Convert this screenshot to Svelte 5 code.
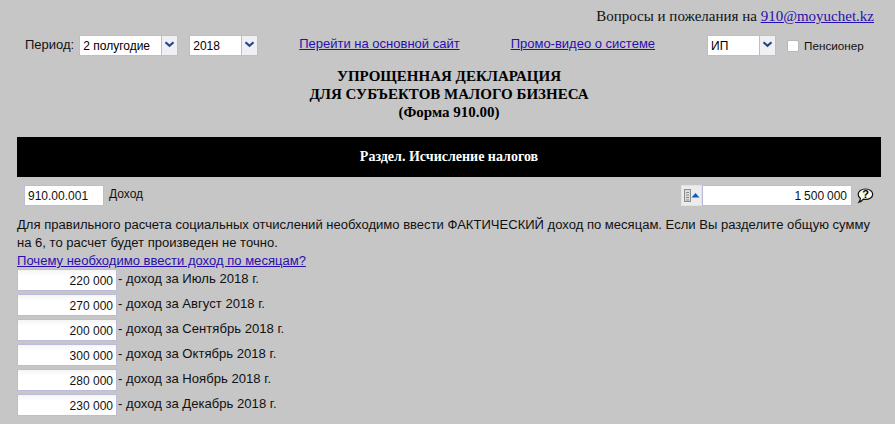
<script>
	const months = [
		{ value: '220 000', name: 'Июль' },
		{ value: '270 000', name: 'Август' },
		{ value: '200 000', name: 'Сентябрь' },
		{ value: '300 000', name: 'Октябрь' },
		{ value: '280 000', name: 'Ноябрь' },
		{ value: '230 000', name: 'Декабрь' }
	];
</script>

{#snippet combo(text, width)}
	<div class="combo" style="width: {width}px">
		<span class="combo-text">{text}</span>
		<span class="combo-btn">
			<svg width="11" height="7" viewBox="0 0 11 7" fill="none">
				<path d="M1.500 1.200L5.500 4.800L9.500 1.200" stroke="#2a4488" stroke-width="2.200"/>
			</svg>
		</span>
	</div>
{/snippet}

<div class="page">
	<div class="contact">Вопросы и пожелания на <a href="#top">910@moyuchet.kz</a></div>

	<div class="toolbar">
		<span class="period-label">Период:</span>
		{@render combo('2 полугодие', 99)}
		{@render combo('2018', 69)}
		<a class="site-link" href="#top">Перейти на основной сайт</a>
		<a class="promo-link" href="#top">Промо-видео о системе</a>
		{@render combo('ИП', 69)}
		<label class="pension"><span class="check"></span>Пенсионер</label>
	</div>

	<h1>УПРОЩЕННАЯ ДЕКЛАРАЦИЯ<br />ДЛЯ СУБЪЕКТОВ МАЛОГО БИЗНЕСА<br />(Форма 910.00)</h1>

	<div class="section-bar">Раздел. Исчисление налогов</div>

	<div class="income-row">
		<div class="field code">910.00.001</div>
		<span class="income-label">Доход</span>
		<span class="calc-btn">
			<svg width="19" height="15" viewBox="0 0 19 15" fill="none">
				<rect x="2.500" y="1.500" width="6" height="12" fill="#dcdcdc" stroke="#8c8c8c"/>
				<path d="M4 4.500H7M4 7H7M4 9.500H7M4 12H7" stroke="#8c8c8c"/>
				<path d="M9.500 9.500L13.500 5L17.500 9.500Z" fill="#0f5cb8"/>
			</svg>
		</span>
		<div class="field total">1 500 000</div>
		<svg class="hint" width="18" height="16" viewBox="0 0 18 16" fill="none">
			<path d="M9.500 1C13.500 1 16.700 3.200 16.700 6.200C16.700 9.200 13.500 11.400 9.500 11.400C8.700 11.400 8 11.300 7.300 11.200C6.300 12.700 4.800 13.800 3 14.200C3.900 13.100 4.400 12 4.400 10.300C3 9.400 2.200 7.900 2.200 6.200C2.200 3.200 5.500 1 9.500 1Z" fill="#fbf9e8" stroke="#111" stroke-width="1.200"/>
			<text x="9.500" y="10" text-anchor="middle" class="hint-mark">?</text>
		</svg>
	</div>

	<p class="note">Для правильного расчета социальных отчислений необходимо ввести ФАКТИЧЕСКИЙ доход по месяцам. Если Вы разделите общую сумму на 6, то расчет будет произведен не точно.</p>
	<a class="why-link" href="#top">Почему необходимо ввести доход по месяцам?</a>

	<div class="months">
		{#each months as month}
			<div class="month-row">
				<div class="field month-value">{month.value}</div>
				<span>- доход за {month.name} 2018 г.</span>
			</div>
		{/each}
	</div>
</div>

<style>
	:global(body) {
		margin: 0;
		background: #c6c6c6;
	}

	.page {
		height: 424px;
		overflow: hidden;
		padding: 0 14px 0 17px;
		font-family: "Liberation Sans", Arial, sans-serif;
		font-size: 13px;
		color: #111;
		background: #c6c6c6;
	}

	a {
		color: #2a0fb0;
	}

	.contact {
		padding: 7px 7px 0 0;
		height: 28px;
		box-sizing: border-box;
		text-align: right;
		font-family: "Liberation Serif", "Times New Roman", serif;
		font-size: 15px;
		line-height: 18px;
	}

	.toolbar {
		display: flex;
		align-items: center;
		height: 21px;
		margin-top: 7px;
		padding-left: 8px;
		font-size: 13px;
	}

	.period-label {
		margin-right: 5px;
		position: relative;
		top: -1px;
	}

	.combo {
		display: flex;
		box-sizing: border-box;
		height: 21px;
		border: 1px solid #bcbcd8;
		background: #fff;
		margin-right: 11px;
	}

	.combo-text {
		flex: 1;
		padding: 3px 0 0 3px;
		font-size: 12px;
		line-height: 15px;
		color: #000;
	}

	.combo-btn {
		display: flex;
		justify-content: center;
		width: 16px;
		padding-top: 5px;
		box-sizing: border-box;
		border-left: 1px solid #bcbcd8;
		background: #f0f0f4;
	}

	.combo-btn svg {
		display: block;
	}

	.site-link {
		margin-left: 30px;
		position: relative;
		top: -2px;
	}

	.promo-link {
		margin-left: 51px;
		margin-right: 52px;
		position: relative;
		top: -2px;
	}

	.pension {
		display: flex;
		align-items: center;
		font-size: 11.700px;
	}

	.check {
		width: 10px;
		height: 10px;
		margin-right: 5px;
		border: 1px solid #b8b8b8;
		border-radius: 2px;
		background: #fff;
	}

	h1 {
		margin: 11px 0 0;
		text-align: center;
		font-family: "Liberation Serif", "Times New Roman", serif;
		font-size: 15px;
		line-height: 18px;
		font-weight: bold;
		color: #000;
	}

	.section-bar {
		width: 864px;
		height: 40px;
		margin-top: 16px;
		background: #000;
		color: #fff;
		text-align: center;
		font-family: "Liberation Serif", "Times New Roman", serif;
		font-size: 14px;
		font-weight: bold;
		line-height: 40px;
	}

	.field {
		box-sizing: border-box;
		border: 1px solid #bcbcd8;
		background: #fff;
		color: #111;
		font-size: 12px;
		line-height: 20px;
	}

	.income-row {
		display: flex;
		align-items: center;
		width: 864px;
		height: 21px;
		margin-top: 8px;
	}

	.code {
		width: 80px;
		height: 21px;
		margin-left: 7px;
		padding-left: 3px;
	}

	.income-label {
		margin-left: 5px;
		margin-right: auto;
		position: relative;
		top: -2px;
		font-size: 12px;
	}

	.calc-btn {
		display: flex;
		align-items: center;
		justify-content: center;
		box-sizing: border-box;
		width: 21px;
		height: 21px;
		border: 1px solid #e2e2e2;
		background: #ececec;
	}

	.total {
		width: 150px;
		height: 21px;
		padding-right: 4px;
		text-align: right;
		word-spacing: -0.500px;
	}

	.hint {
		margin-left: 4px;
		margin-right: 7px;
	}

	.hint-mark {
		font-family: "Liberation Sans", sans-serif;
		font-size: 11px;
		font-weight: bold;
		fill: #000;
	}

	.note {
		width: 864px;
		margin: 10px 0 0;
		font-size: 13.050px;
		line-height: 18px;
	}

	.why-link {
		display: block;
		font-size: 13.050px;
		line-height: 17px;
	}

	.months {
		display: flex;
		flex-direction: column;
		gap: 3px;
	}

	.month-row {
		display: flex;
		align-items: center;
		gap: 1px;
		height: 22px;
		font-size: 13.100px;
	}

	.month-row span {
		position: relative;
		top: -2px;
	}

	.month-value {
		width: 100px;
		height: 22px;
		padding-right: 3px;
		text-align: right;
		line-height: 22px;
		background: linear-gradient(#f4f4f4, #fff 30%);
	}
</style>
